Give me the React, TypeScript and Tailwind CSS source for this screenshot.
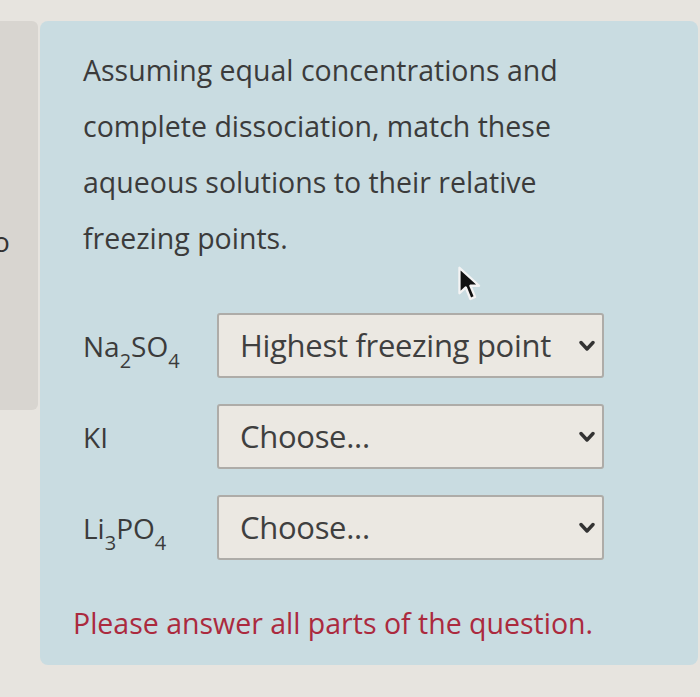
type Row = { label: React.ReactNode; value: string };

const sub = "text-[20px] align-[-6px]";

const rows: Row[] = [
  {
    label: (
      <>
        Na<sub className={sub}>2</sub>SO<sub className={sub}>4</sub>
      </>
    ),
    value: "Highest freezing point",
  },
  { label: "KI", value: "Choose..." },
  {
    label: (
      <>
        Li<sub className={sub}>3</sub>PO<sub className={sub}>4</sub>
      </>
    ),
    value: "Choose...",
  },
];

function Cursor() {
  return (
    <svg
      className="absolute left-[416px] top-[244px] w-[30px] h-[38px]"
      viewBox="0 0 26 32"
    >
      <path
        d="M3 2 L3 24 L8.5 19 L12.5 29 L16.5 27.2 L12.5 17.5 L20 17.5 Z"
        fill="#111"
        stroke="#f4f4f4"
        strokeWidth="2"
        strokeLinejoin="round"
      />
    </svg>
  );
}

function Chevron() {
  return (
    <svg viewBox="0 0 16 12" className="w-[16px] h-[12px]">
      <path
        d="M2 2.5 L8 9 L14 2.5"
        fill="none"
        stroke="#333"
        strokeWidth="3.4"
        strokeLinecap="round"
        strokeLinejoin="round"
      />
    </svg>
  );
}

export default function App() {
  return (
    <div
      className="w-[700px] h-[697px] bg-[#e7e4df] pt-[21px] flex gap-[2px] text-[#3b3b3b] overflow-hidden"
      style={{ fontFamily: '"Open Sans", "Liberation Sans", sans-serif' }}
    >
      {/* side column, partly off-screen */}
      <div className="w-[38px] h-[389px] shrink-0 bg-[#d8d5d0] rounded-r-md flex items-center">
        <span className="text-[28px] -ml-[7px] mt-[50px] text-[#333]">o</span>
      </div>

      {/* question card */}
      <div className="relative w-[658px] h-[644px] bg-[#c9dce1] rounded-lg pl-[43px] pt-[21px]">
        <p className="text-[28.5px] leading-[56px] w-[520px]">
          Assuming equal concentrations and complete dissociation, match these
          aqueous solutions to their relative freezing points.
        </p>

        <Cursor />

        <div className="mt-[47px] flex flex-col gap-[26px]">
          {rows.map((row, i) => (
            <div key={i} className="flex items-center">
              <div className="w-[134px] text-[28px] leading-none">{row.label}</div>
              <div className="w-[387px] h-[65px] bg-[#ebe8e2] border-2 border-[#aeaca8] rounded-[3px] flex items-center justify-between pl-[21px] pr-[7px]">
                <span className="text-[31px] text-[#3f3f3f] tracking-[-0.3px]">
                  {row.value}
                </span>
                <Chevron />
              </div>
            </div>
          ))}
        </div>

        <p className="mt-[42px] -ml-[10px] text-[28.5px] text-[#ab2a3e]">
          Please answer all parts of the question.
        </p>
      </div>
    </div>
  );
}
